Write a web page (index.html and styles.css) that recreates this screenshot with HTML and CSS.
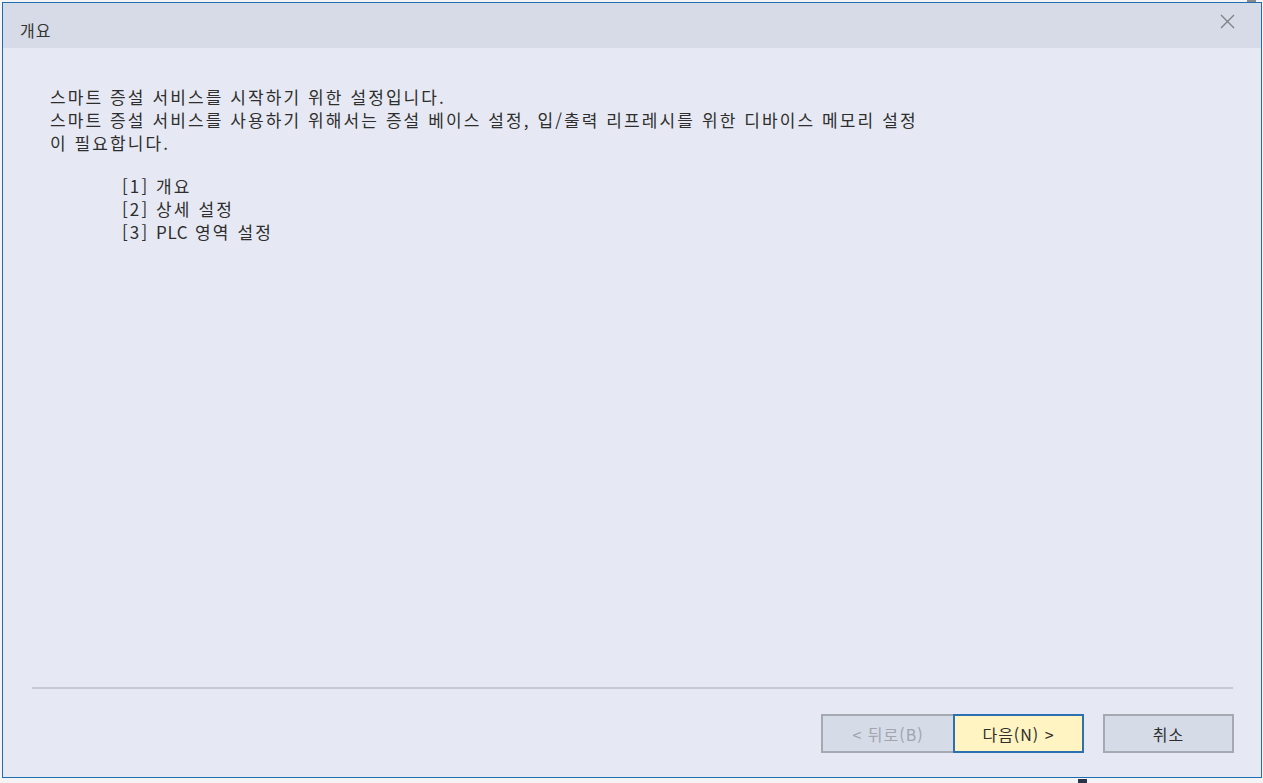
FILE: index.html
```html
<!DOCTYPE html>
<html lang="ko">
<head>
<meta charset="utf-8">
<title>개요</title>
<link rel="stylesheet" href="styles.css">
</head>
<body>
<div class="screen">
  <div class="window">
    <div class="titlebar">
      <span class="title">개요</span>
      <span class="close">
        <svg width="15" height="15" viewBox="0 0 15 15"><path d="M1 1 L14 14 M14 1 L1 14" stroke="#7f8287" stroke-width="1.4" fill="none"/></svg>
      </span>
    </div>
    <div class="content">
      <p class="intro">스마트 증설 서비스를 시작하기 위한 설정입니다.<br>스마트 증설 서비스를 사용하기 위해서는 증설 베이스 설정, 입/출력 리프레시를 위한 디바이스 메모리 설정<br>이 필요합니다.</p>
      <ul class="steps">
        <li>[1] 개요</li>
        <li>[2] 상세 설정</li>
        <li>[3] <span class="latin">PLC</span> 영역 설정</li>
      </ul>
    </div>
    <div class="separator"></div>
    <div class="buttons">
      <div class="nav-group">
        <button class="btn btn-back" disabled>&lt; 뒤로(B)</button>
        <button class="btn btn-next">다음(N) &gt;</button>
      </div>
      <button class="btn btn-cancel">취소</button>
    </div>
  </div>
  <div class="peek peek-bottom"></div>
  <div class="peek peek-top"></div>
</div>
</body>
</html>
```
FILE: styles.css
```css
html, body {
  margin: 0;
  padding: 0;
  background: #f4f4f4;
  font-family: "Noto Sans CJK KR", "Noto Sans", sans-serif;
  color: #2b2b2b;
}

.screen {
  position: relative;
  width: 1263px;
  height: 783px;
  overflow: hidden;
  padding-top: 2px;
  padding-left: 2px;
  box-sizing: border-box;
}

.window {
  width: 1260px;
  height: 776px;
  box-sizing: border-box;
  border: 1px solid #1d6db3;
  background: #e6e9f3;
  display: flex;
  flex-direction: column;
}

.titlebar {
  height: 45px;
  flex: none;
  background: #d6dbe7;
  display: flex;
  align-items: center;
  justify-content: space-between;
  padding: 0 26px 0 17px;
  box-sizing: border-box;
}

.title {
  font-size: 16px;
  letter-spacing: 1px;
  color: #333;
  margin-top: 9px;
}

.close {
  display: flex;
  margin-top: -8px;
}

.content {
  flex: 1;
  padding: 37px 0 0 47px;
  font-size: 17px;
  letter-spacing: 2.1px;
  line-height: 23px;
  color: #2e2e2e;
}

.intro {
  margin: 0;
}

.steps {
  list-style: none;
  margin: 20px 0 0 72px;
  padding: 0;
}

.latin {
  letter-spacing: 0.6px;
}

.separator {
  flex: none;
  height: 2px;
  background: #c6c9d1;
  margin: 0 28px 0 29px;
}

.buttons {
  flex: none;
  display: flex;
  justify-content: flex-end;
  gap: 19px;
  padding: 25px 27px 24px 0;
}

.nav-group {
  display: flex;
}

.btn {
  width: 132px;
  height: 39px;
  box-sizing: border-box;
  font-family: "Noto Sans CJK KR", "Noto Sans", sans-serif;
  font-size: 16px;
  letter-spacing: 1px;
  border: 2px solid #a4a9b2;
  background: #d5dbe7;
  color: #2e2e2e;
  padding: 0;
}

.btn-back {
  color: #a0a5ae;
  border-right: none;
}

.btn-next {
  width: 131px;
  background: #fff4c2;
  border-color: #2b70b0;
}

.btn-cancel {
  width: 131px;
}

.peek {
  position: absolute;
  background: #2a3448;
}

.peek-bottom {
  left: 1078px;
  top: 779px;
  width: 9px;
  height: 4px;
}

.peek-top {
  left: 1247px;
  top: 0;
  width: 9px;
  height: 2px;
  background: #8a8a8a;
}
```
